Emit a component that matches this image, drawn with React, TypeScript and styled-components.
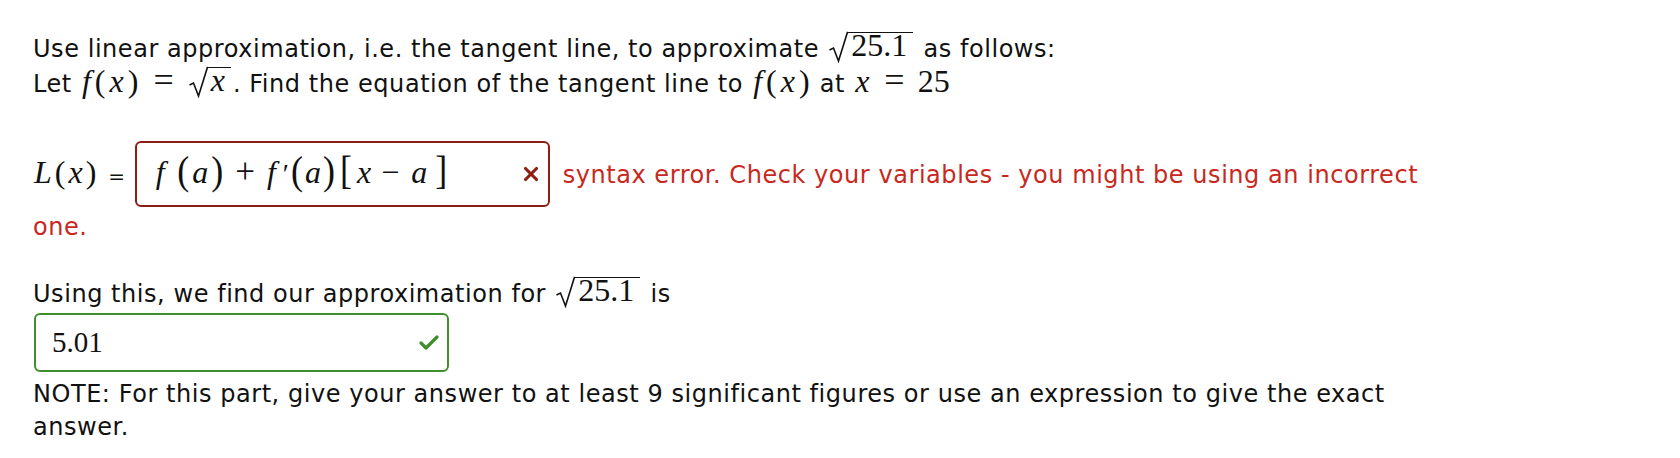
import React from 'react';
import styled, { createGlobalStyle } from 'styled-components';
import { X, Check } from 'lucide-react';

const colors = {
    text: '#111111',
    error: '#c8281e',
    errorBorder: '#8e1d12',
    success: '#3f8f2c',
};

const mathFont = `'Liberation Serif', 'DejaVu Serif', serif`;

const GlobalStyle = createGlobalStyle`
    html, body {
        margin: 0;
        padding: 0;
        background: #ffffff;
    }
`;

const Page = styled.main`
    padding: 32px 33px 0 33px;
    width: 1430px;
    font-family: 'DejaVu Sans', Verdana, sans-serif;
    font-size: 24px;
    letter-spacing: 0.55px;
    line-height: 33px;
    color: ${colors.text};
`;

const Paragraph = styled.p<{ $top?: number; $lineHeight?: number }>`
    margin: ${(p) => p.$top ?? 0}px 0 0 0;
    line-height: ${(p) => p.$lineHeight ?? 33}px;
`;

const MathBase = styled.span`
    font-family: ${mathFont};
    font-size: 32px;
    line-height: 20px;
    letter-spacing: 0;
`;

const MathVar = styled(MathBase)<{ $pad?: number }>`
    font-style: italic;
    padding: 0 ${(p) => p.$pad ?? 1}px;
`;

const MathNum = styled(MathBase)``;

const MathOp = styled(MathBase)<{ $space?: number; $size?: number }>`
    font-size: ${(p) => p.$size ?? 32}px;
    padding: 0 ${(p) => p.$space ?? 0}px;
`;

const Paren = styled(MathBase)`
    padding: 0 2px;
`;

const Prime = styled(MathBase)`
    font-size: 28px;
    padding: 0 1px 0 5px;
`;

const Fence = styled(MathBase)<{ $pad?: number }>`
    font-size: 36px;
    display: inline-block;
    transform: scaleY(1.12);
    padding: 0 ${(p) => p.$pad ?? 2}px;
`;

const SqrtWrap = styled.span`
    display: inline-flex;
    align-items: flex-end;
    vertical-align: -6px;
    margin: -10px 2px 0 1px;
`;

const Radical = styled.svg`
    width: 20px;
    height: 32px;
    flex: none;
`;

const Radicand = styled.span<{ $left: number; $right: number }>`
    border-top: 1.5px solid currentColor;
    line-height: 29px;
    padding: 1px ${(p) => p.$right}px 0 ${(p) => p.$left}px;
`;

const Sqrt = ({ children, left = 3, right = 6 }: { children: React.ReactNode; left?: number; right?: number }) => (
    <SqrtWrap>
        <Radical viewBox="0 0 20 32">
            <path d="M1.5 19 L5.5 17 L10.5 30 L19.6 0.8" fill="none" stroke="currentColor" strokeWidth="1.6" />
        </Radical>
        <Radicand $left={left} $right={right}>
            {children}
        </Radicand>
    </SqrtWrap>
);

const AnswerLine = styled.div`
    margin-top: 39px;
`;

const Equals = styled.span`
    font-size: 20px;
    margin: 0 9px 0 10px;
`;

const AnswerBox = styled.span<{ $state: 'error' | 'ok'; $width: number }>`
    display: inline-flex;
    align-items: center;
    justify-content: space-between;
    box-sizing: border-box;
    width: ${(p) => p.$width}px;
    height: ${(p) => (p.$state === 'error' ? 66 : 59)}px;
    margin-bottom: 4px;
    padding: 0 6px 0 16px;
    border: 2px solid ${(p) => (p.$state === 'error' ? colors.errorBorder : colors.success)};
    border-radius: 6px;
    line-height: 1;
    letter-spacing: 0;
`;

const BlockBox = styled(AnswerBox)`
    display: flex;
    margin: 2px 0 0 1px;
    padding-left: 16px;
`;

const BoxContent = styled.span`
    white-space: nowrap;
`;

const ErrorMessage = styled.span`
    color: ${colors.error};
    margin-left: 13px;
`;

const Value = styled.span`
    font-family: ${mathFont};
    font-size: 29px;
`;

const Note = styled.p`
    margin: 6px 0 0 0;
`;

const App = () => {
    return (
        <>
            <GlobalStyle />
            <Page>
                <Paragraph $lineHeight={35}>
                    Use linear approximation, i.e. the tangent line, to approximate{' '}
                    <Sqrt>
                        <MathNum>25.1</MathNum>
                    </Sqrt>{' '}
                    as follows:
                    <br />
                    Let <MathVar $pad={2}>f</MathVar>
                    <Paren>(</Paren>
                    <MathVar $pad={2}>x</MathVar>
                    <Paren>)</Paren>
                    <MathOp $space={13} $size={36}>=</MathOp>
                    <Sqrt left={1} right={4}>
                        <MathVar $pad={2}>x</MathVar>
                    </Sqrt>
                    . Find the equation of the tangent line to <MathVar $pad={2}>f</MathVar>
                    <Paren>(</Paren>
                    <MathVar $pad={2}>x</MathVar>
                    <Paren>)</Paren> at <MathVar $pad={2}>x</MathVar>
                    <MathOp $space={13} $size={36}>=</MathOp>
                    <MathNum>25</MathNum>
                </Paragraph>

                <AnswerLine>
                    <MathVar>L</MathVar>
                    <Paren>(</Paren>
                    <MathVar>x</MathVar>
                    <Paren>)</Paren>
                    <Equals>=</Equals>
                    <AnswerBox $state="error" $width={415}>
                        <BoxContent>
                            <MathVar $pad={3}>f</MathVar> <Fence>(</Fence>
                            <MathVar>a</MathVar>
                            <Fence>)</Fence>
                            <MathOp $space={10} $size={35}>+</MathOp>
                            <MathVar $pad={2}>f</MathVar>
                            <Prime>′</Prime>
                            <Fence $pad={1}>(</Fence>
                            <MathVar>a</MathVar>
                            <Fence $pad={1}>)</Fence>
                            <Fence $pad={4}>[</Fence>
                            <MathVar>x</MathVar>
                            <MathOp $space={9}>−</MathOp>
                            <MathVar $pad={3}>a</MathVar>
                            <Fence $pad={5}>]</Fence>
                        </BoxContent>
                        <X size={22} strokeWidth={3.4} color={colors.errorBorder} />
                    </AnswerBox>
                    <ErrorMessage>
                        syntax error. Check your variables - you might be using an incorrect one.
                    </ErrorMessage>
                </AnswerLine>

                <Paragraph $top={34}>
                    Using this, we find our approximation for{' '}
                    <Sqrt>
                        <MathNum>25.1</MathNum>
                    </Sqrt>{' '}
                    is
                </Paragraph>
                <BlockBox $state="ok" $width={415}>
                    <Value>5.01</Value>
                    <Check size={24} strokeWidth={3.2} color={colors.success} />
                </BlockBox>
                <Note>
                    NOTE: For this part, give your answer to at least 9 significant figures or use an expression to give
                    the exact answer.
                </Note>
            </Page>
        </>
    );
};

export default App;
